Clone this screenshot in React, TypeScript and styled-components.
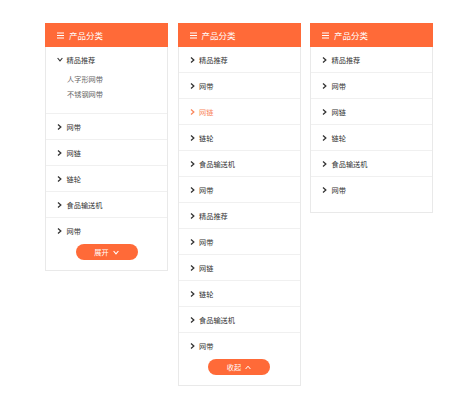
import { useState } from 'react';
import styled, { createGlobalStyle } from 'styled-components';

const GlobalStyle = createGlobalStyle`
  html, body {
    margin: 0;
    padding: 0;
    background: #ffffff;
  }
  body {
    font-family: "Noto Sans CJK SC", "Noto Sans", sans-serif;
  }
`;

const ORANGE = '#ff6a38';

interface ICategory {
  name: string;
  children?: string[];
}

const shortList: ICategory[] = [
  { name: '精品推荐', children: ['人字形网带', '不锈钢网带'] },
  { name: '网带' },
  { name: '网链' },
  { name: '链轮' },
  { name: '食品输送机' },
  { name: '网带' }
];

const longList: ICategory[] = [...shortList, ...shortList];

function ChevronRight({ color = '#333' }: { color?: string }) {
  return (
    <svg width="5" height="6" viewBox="0 0 5 6">
      <path d="M1 0.6 L3.8 3 L1 5.4" fill="none" stroke={color} strokeWidth="1.3" />
    </svg>
  );
}

function ChevronDown({ color = '#333' }: { color?: string }) {
  return (
    <svg width="6" height="5" viewBox="0 0 6 5">
      <path d="M0.6 1 L3 3.8 L5.4 1" fill="none" stroke={color} strokeWidth="1.1" />
    </svg>
  );
}

function ChevronUp({ color = '#fff' }: { color?: string }) {
  return (
    <svg width="6" height="5" viewBox="0 0 6 5">
      <path d="M0.6 4 L3 1.2 L5.4 4" fill="none" stroke={color} strokeWidth="1" />
    </svg>
  );
}

function MenuIcon() {
  return (
    <svg width="7" height="7" viewBox="0 0 7 7">
      <path d="M0 1 H7 M0 3.5 H7 M0 6 H7" stroke="#fff" strokeWidth="1.1" />
    </svg>
  );
}

interface PanelProps {
  items: ICategory[];
  expandedIndex?: number;
  activeIndex?: number;
  toggle?: 'open' | 'close';
}

function Panel({ items, expandedIndex, activeIndex, toggle }: PanelProps) {
  const [open, setOpen] = useState<number | undefined>(expandedIndex);
  return (
    <StyledPanel $hasToggle={!!toggle}>
      <PanelHeader>
        <MenuIcon />
        <span>产品分类</span>
      </PanelHeader>
      <List>
        {items.map((item, i) => {
          const isOpen = open === i && !!item.children;
          const isActive = activeIndex === i;
          return (
            <Row key={i} $expanded={isOpen}>
              <RowTitle $active={isActive} onClick={() => setOpen(open === i ? undefined : i)}>
                <IconSlot>
                  {isOpen ? <ChevronDown /> : <ChevronRight color={isActive ? '#f9875d' : '#333'} />}
                </IconSlot>
                {item.name}
              </RowTitle>
              {isOpen && (
                <SubList>
                  {item.children!.map((c) => (
                    <SubItem key={c}>{c}</SubItem>
                  ))}
                </SubList>
              )}
            </Row>
          );
        })}
      </List>
      {toggle && (
        <ToggleButton>
          {toggle === 'open' ? '展开' : '收起'}
          {toggle === 'open' ? <ChevronDown color="#fff" /> : <ChevronUp />}
        </ToggleButton>
      )}
    </StyledPanel>
  );
}

export default function App() {
  return (
    <>
      <GlobalStyle />
      <Page>
        <Panel items={shortList} expandedIndex={0} toggle="open" />
        <Panel items={longList.map((c) => ({ name: c.name }))} activeIndex={2} toggle="close" />
        <Panel items={shortList.map((c) => ({ name: c.name }))} />
      </Page>
    </>
  );
}

const Page = styled.div`
  display: flex;
  align-items: flex-start;
  gap: 9.5px;
  padding: 23px 0 0 45px;
`;

const StyledPanel = styled.div<{ $hasToggle: boolean }>`
  width: 123px;
  box-sizing: border-box;
  border: 1px solid #e9e9e9;
  border-top: none;
  background: #fff;
  display: flex;
  flex-direction: column;
  align-items: center;
  padding-bottom: 10px;
`;

const PanelHeader = styled.div`
  align-self: stretch;
  margin: 0 -1px;
  height: 24px;
  background: ${ORANGE};
  color: #fff;
  display: flex;
  align-items: center;
  gap: 5px;
  padding-left: 12px;
  font-size: 8.5px;
  svg {
    display: block;
  }
`;

const List = styled.ul`
  align-self: stretch;
  list-style: none;
  margin: 0;
  padding: 0;
`;

const Row = styled.li<{ $expanded: boolean }>`
  border-bottom: 1px solid #f0f0f0;
  padding-bottom: ${({ $expanded }) => ($expanded ? '11px' : '0')};
  &:last-child {
    border-bottom: none;
  }
`;

const RowTitle = styled.div<{ $active: boolean }>`
  height: 25px;
  display: flex;
  align-items: center;
  padding-left: 11px;
  font-size: 7.2px;
  color: ${({ $active }) => ($active ? '#f9875d' : '#333')};
  cursor: pointer;
`;

const IconSlot = styled.span`
  width: 9.5px;
  display: flex;
  align-items: center;
  svg {
    display: block;
  }
`;

const SubList = styled.ul`
  list-style: none;
  margin: 0;
  padding: 0 0 0 21px;
`;

const SubItem = styled.li`
  height: 15px;
  line-height: 15px;
  font-size: 7.2px;
  color: #666;
`;

const ToggleButton = styled.button`
  width: 62px;
  height: 16px;
  margin-top: 1px;
  border: none;
  border-radius: 8px;
  background: ${ORANGE};
  color: #fff;
  font-family: inherit;
  font-size: 7.2px;
  display: flex;
  align-items: center;
  justify-content: center;
  gap: 4px;
  padding: 0;
  cursor: pointer;
  svg {
    display: block;
  }
`;
